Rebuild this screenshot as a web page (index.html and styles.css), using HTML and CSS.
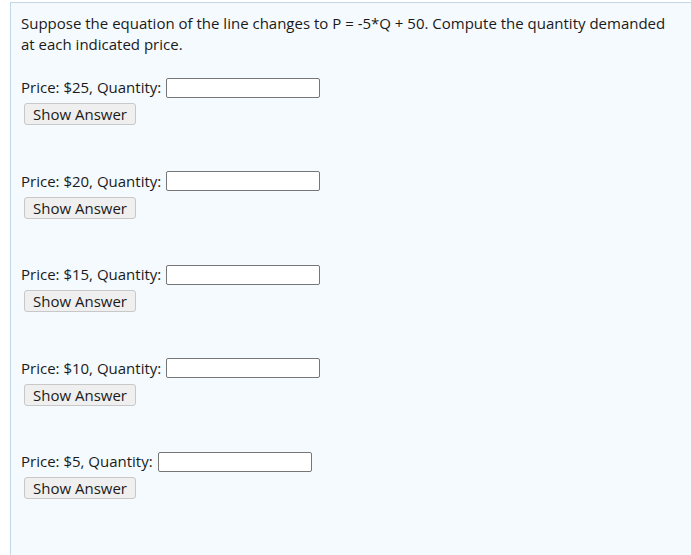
FILE: index.html
```html
<!DOCTYPE html>
<html>
<head>
<meta charset="utf-8">
<link rel="stylesheet" href="styles.css">
</head>
<body>
<div class="panel">
  <p class="question">Suppose the equation of the line changes to P = -5*Q + 50. Compute the quantity demanded at each indicated price.</p>
  <div class="items">
    <div class="item">
      <label class="row">Price: $25, Quantity: <input class="field" type="text"></label>
      <button class="btn">Show Answer</button>
    </div>
    <div class="item">
      <label class="row">Price: $20, Quantity: <input class="field" type="text"></label>
      <button class="btn">Show Answer</button>
    </div>
    <div class="item">
      <label class="row">Price: $15, Quantity: <input class="field" type="text"></label>
      <button class="btn">Show Answer</button>
    </div>
    <div class="item">
      <label class="row">Price: $10, Quantity: <input class="field" type="text"></label>
      <button class="btn">Show Answer</button>
    </div>
    <div class="item">
      <label class="row">Price: $5, Quantity: <input class="field" type="text"></label>
      <button class="btn">Show Answer</button>
    </div>
  </div>
</div>
</body>
</html>
```
FILE: styles.css
```css
html, body {
  margin: 0;
  padding: 0;
  background: #ffffff;
}
body {
  font-family: "Open Sans", "Liberation Sans", sans-serif;
  font-size: 15px;
  color: #1a1a1a;
  height: 555px;
  overflow: hidden;
}
.panel {
  margin: 2px 0 0 10px;
  border-top: 1px solid #c3d8e6;
  border-left: 1px solid #c3d8e6;
  background: #f5faff;
  padding: 10px 0 0 10px;
  min-height: 560px;
  box-sizing: border-box;
}
.question {
  margin: 0;
  font-size: 15px;
  line-height: 21px;
  width: 660px;
}
.items {
  display: flex;
  flex-direction: column;
  gap: 45.5px;
  margin-top: 22px;
}
.item {
  display: flex;
  flex-direction: column;
  align-items: flex-start;
}
.row {
  display: flex;
  align-items: center;
  height: 21px;
  line-height: 21px;
  gap: 5px;
}
.field {
  width: 154px;
  height: 20px;
  box-sizing: border-box;
  border: 1px solid #767676;
  border-radius: 2px;
  background: #ffffff;
  padding: 0 3px;
  margin: 0;
  font: inherit;
}
.btn {
  margin: 5px 0 0 3px;
  height: 22px;
  padding: 0 8px;
  font-family: "Open Sans", "Liberation Sans", sans-serif;
  font-size: 15px;
  color: #1a1a1a;
  background: #efefef;
  border: 1px solid #c8c8c8;
  border-radius: 3px;
  line-height: 20px;
}
```
